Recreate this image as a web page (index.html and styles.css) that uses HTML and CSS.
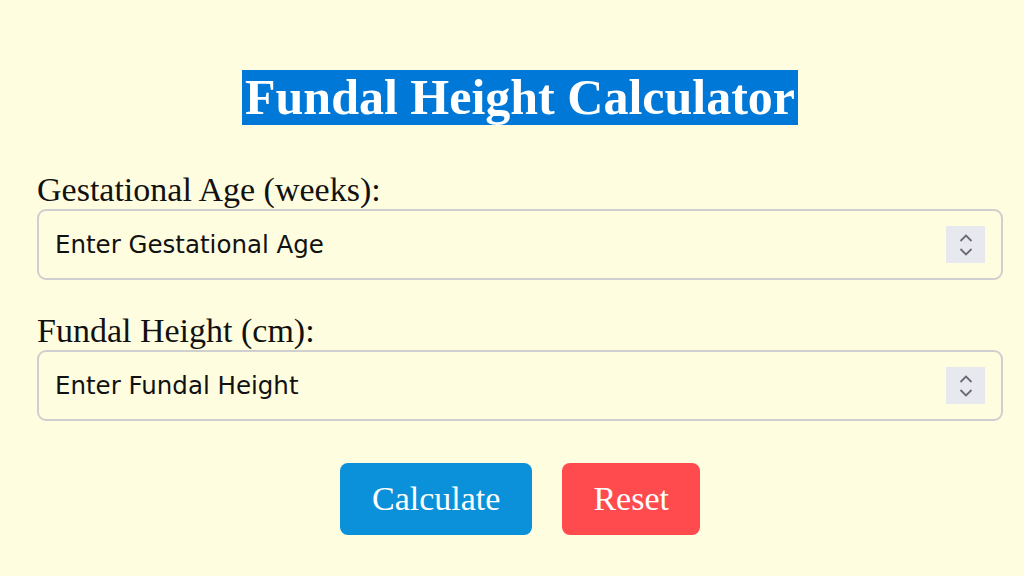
FILE: index.html
```html
<!DOCTYPE html>
<html>
<head>
<meta charset="utf-8">
<link rel="stylesheet" href="styles.css">
</head>
<body>
<main class="calc">
  <div class="title-row"><h1 class="title">Fundal Height Calculator</h1></div>
  <div class="field">
    <label class="label" for="ga">Gestational Age (weeks):</label>
    <div class="input-wrap">
      <input class="input" id="ga" type="text" placeholder="Enter Gestational Age">
      <span class="spinner"><svg width="16" height="28" viewBox="0 0 16 28"><path d="M2.5 10 L8 4.5 L13.5 10" fill="none" stroke="#6b6b73" stroke-width="1.8"/><path d="M2.5 18 L8 23.5 L13.5 18" fill="none" stroke="#6b6b73" stroke-width="1.8"/></svg></span>
    </div>
  </div>
  <div class="field">
    <label class="label" for="fh">Fundal Height (cm):</label>
    <div class="input-wrap">
      <input class="input" id="fh" type="text" placeholder="Enter Fundal Height">
      <span class="spinner"><svg width="16" height="28" viewBox="0 0 16 28"><path d="M2.5 10 L8 4.5 L13.5 10" fill="none" stroke="#6b6b73" stroke-width="1.8"/><path d="M2.5 18 L8 23.5 L13.5 18" fill="none" stroke="#6b6b73" stroke-width="1.8"/></svg></span>
    </div>
  </div>
  <div class="actions">
    <button class="btn btn-calc">Calculate</button>
    <button class="btn btn-reset">Reset</button>
  </div>
</main>
</body>
</html>
```
FILE: styles.css
```css
html, body {
  margin: 0;
  padding: 0;
  background: #fffddf;
}
body {
  font-family: "Liberation Serif", "Times New Roman", serif;
  color: #111;
}
.calc {
  padding: 70px 21px 0 37px;
  display: flex;
  flex-direction: column;
}
.title-row {
  display: flex;
  justify-content: center;
  margin-bottom: 46px;
}
.title {
  margin: 0;
  background: #0078d7;
  color: #fff;
  font-size: 50px;
  font-weight: bold;
  line-height: 55px;
  padding: 0 3px;
}
.field {
  display: flex;
  flex-direction: column;
  margin-bottom: 32px;
}
.label {
  font-size: 34px;
  line-height: 38px;
}
.input-wrap {
  position: relative;
}
.input {
  box-sizing: border-box;
  width: 100%;
  height: 71px;
  border: 2px solid #cfcfcf;
  border-radius: 9px;
  background: #fffddf;
  padding: 0 16px;
  font-family: "DejaVu Sans", Verdana, sans-serif;
  font-size: 24.5px;
  color: #111;
  outline: none;
}
.input::placeholder {
  color: #111;
  opacity: 1;
}
.spinner {
  position: absolute;
  right: 18px;
  top: 17px;
  width: 39px;
  height: 37px;
  background: #e8e8ef;
  display: flex;
  align-items: center;
  justify-content: center;
}
.actions {
  display: flex;
  justify-content: center;
  gap: 30px;
  margin-top: 10px;
}
.btn {
  border: none;
  border-radius: 8px;
  color: #fff;
  font-family: "Liberation Serif", "Times New Roman", serif;
  font-size: 34px;
  height: 72px;
  padding: 0 32px;
}
.btn-calc {
  background: #0b90da;
}
.btn-reset {
  background: #ff4b4d;
  padding: 0 31px;
}
```
